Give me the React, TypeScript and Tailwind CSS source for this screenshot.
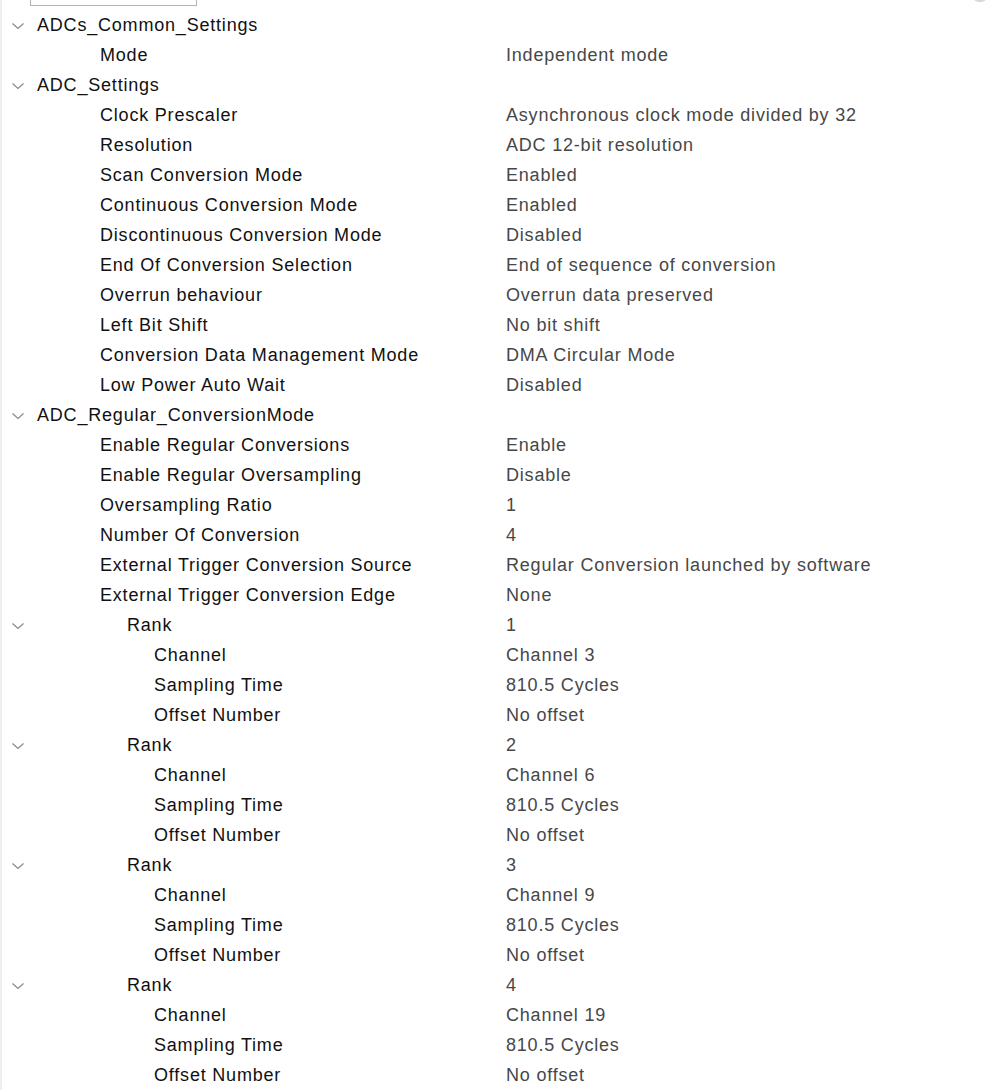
import React from "react";

type Row = { label: string; value?: string; level: 0 | 1 | 2 | 3; chevron?: boolean };

const rows: Row[] = [
  { label: "ADCs_Common_Settings", level: 0, chevron: true },
  { label: "Mode", value: "Independent mode", level: 1 },
  { label: "ADC_Settings", level: 0, chevron: true },
  { label: "Clock Prescaler", value: "Asynchronous clock mode divided by 32", level: 1 },
  { label: "Resolution", value: "ADC 12-bit resolution", level: 1 },
  { label: "Scan Conversion Mode", value: "Enabled", level: 1 },
  { label: "Continuous Conversion Mode", value: "Enabled", level: 1 },
  { label: "Discontinuous Conversion Mode", value: "Disabled", level: 1 },
  { label: "End Of Conversion Selection", value: "End of sequence of conversion", level: 1 },
  { label: "Overrun behaviour", value: "Overrun data preserved", level: 1 },
  { label: "Left Bit Shift", value: "No bit shift", level: 1 },
  { label: "Conversion Data Management Mode", value: "DMA Circular Mode", level: 1 },
  { label: "Low Power Auto Wait", value: "Disabled", level: 1 },
  { label: "ADC_Regular_ConversionMode", level: 0, chevron: true },
  { label: "Enable Regular Conversions", value: "Enable", level: 1 },
  { label: "Enable Regular Oversampling", value: "Disable", level: 1 },
  { label: "Oversampling Ratio", value: "1", level: 1 },
  { label: "Number Of Conversion", value: "4", level: 1 },
  { label: "External Trigger Conversion Source", value: "Regular Conversion launched by software", level: 1 },
  { label: "External Trigger Conversion Edge", value: "None", level: 1 },
  ...[
    ["1", "Channel 3"],
    ["2", "Channel 6"],
    ["3", "Channel 9"],
    ["4", "Channel 19"],
  ].flatMap(([n, ch]) => [
    { label: "Rank", value: n, level: 2 as const, chevron: true },
    { label: "Channel", value: ch, level: 3 as const },
    { label: "Sampling Time", value: "810.5 Cycles", level: 3 as const },
    { label: "Offset Number", value: "No offset", level: 3 as const },
  ]),
];

const indent: Record<number, string> = {
  0: "pl-[35px]",
  1: "pl-[98px]",
  2: "pl-[125px]",
  3: "pl-[152px]",
};

function Chevron() {
  return (
    <svg
      className="absolute left-[9px] top-[12px]"
      width="14"
      height="8"
      viewBox="0 0 14 8"
      fill="none"
    >
      <path d="M1.5 1.5 L7 6.5 L12.5 1.5" stroke="#8a8a8a" strokeWidth="1.2" />
    </svg>
  );
}

export default function App() {
  return (
    <div
      className="relative w-[993px] h-[1090px] bg-white overflow-hidden border-l-[2px] border-[#efefef]"
      style={{ fontFamily: '"Liberation Sans", Arial, sans-serif' }}
    >
      <div className="ml-[28px] w-[167px] h-[6px] border-x border-b border-[#b4b4b4]" />
      <div className="absolute right-[6px] top-[-10px] w-[14px] h-[12px] rounded-full bg-[#d8d8d8]" />
      <div className="mt-[4px] flex flex-col">
        {rows.map((r, i) => (
          <div key={i} className="relative flex h-[30px] items-center text-[18px] tracking-[0.8px]">
            {r.chevron && <Chevron />}
            <div className={"w-[504px] shrink-0 text-[#111] whitespace-nowrap " + indent[r.level]}>
              {r.label}
            </div>
            {r.value !== undefined && (
              <div className="text-[#474747] whitespace-nowrap">{r.value}</div>
            )}
          </div>
        ))}
      </div>
    </div>
  );
}
